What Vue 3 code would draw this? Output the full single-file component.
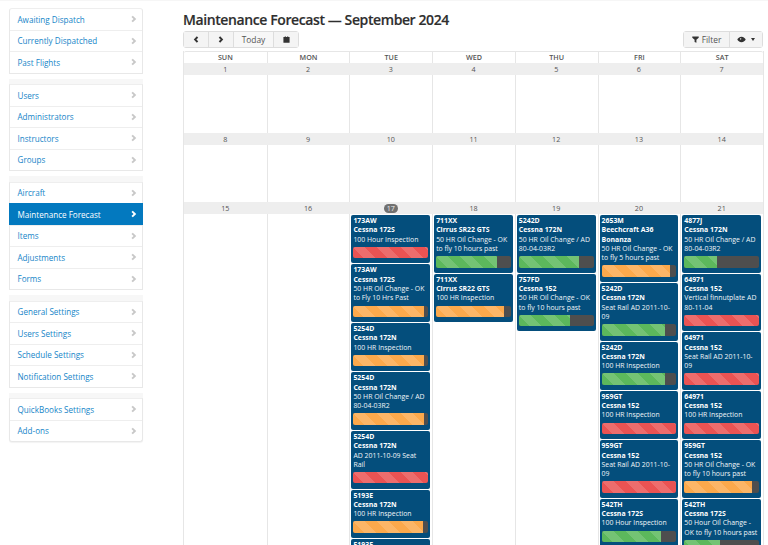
<script setup>
const groups = [
  ['Awaiting Dispatch', 'Currently Dispatched', 'Past Flights'],
  ['Users', 'Administrators', 'Instructors', 'Groups'],
  ['Aircraft', 'Maintenance Forecast', 'Items', 'Adjustments', 'Forms'],
  ['General Settings', 'Users Settings', 'Schedule Settings', 'Notification Settings'],
  ['QuickBooks Settings', 'Add-ons']
]
const days = ['SUN', 'MON', 'TUE', 'WED', 'THU', 'FRI', 'SAT']
const e = (tail, model, desc, color, pct) => ({ tail, model, desc, color, pct })
const weeks = [
  { nums: [1, 2, 3, 4, 5, 6, 7], cols: null },
  { nums: [8, 9, 10, 11, 12, 13, 14], cols: null },
  {
    nums: [15, 16, 17, 18, 19, 20, 21],
    cols: [
      [],
      [],
      [
        e('173AW', 'Cessna 172S', '100 Hour Inspection', 'red', 100),
        e('173AW', 'Cessna 172S', '50 HR Oil Change - OK to Fly 10 Hrs Past', 'orange', 95),
        e('5254D', 'Cessna 172N', '100 HR Inspection', 'orange', 95),
        e('5254D', 'Cessna 172N', '50 HR Oil Change / AD 80-04-03R2', 'orange', 95),
        e('5254D', 'Cessna 172N', 'AD 2011-10-09 Seat Rail', 'red', 100),
        e('5193E', 'Cessna 172N', '100 HR Inspection', 'orange', 93),
        e('5193E', 'Cessna 172N', '100 HR Inspection', 'orange', 93)
      ],
      [
        e('711XX', 'Cirrus SR22 GTS', '50 HR Oil Change - OK to fly 10 hours past', 'green', 82),
        e('711XX', 'Cirrus SR22 GTS', '100 HR Inspection', 'orange', 91)
      ],
      [
        e('5242D', 'Cessna 172N', '50 HR Oil Change / AD 80-04-03R2', 'green', 80),
        e('757FD', 'Cessna 152', '50 HR Oil Change - OK to fly 10 hours past', 'green', 69)
      ],
      [
        e('2653M', 'Beechcraft A36 Bonanza', '50 HR Oil Change - OK to fly 5 hours past', 'orange', 91),
        e('5242D', 'Cessna 172N', 'Seat Rail AD 2011-10-09', 'green', 85),
        e('5242D', 'Cessna 172N', '100 HR Inspection', 'green', 85),
        e('959GT', 'Cessna 152', '100 HR Inspection', 'red', 100),
        e('959GT', 'Cessna 152', 'Seat Rail AD 2011-10-09', 'red', 100),
        e('542TH', 'Cessna 172S', '100 Hour Inspection', 'green', 80)
      ],
      [
        e('4877J', 'Cessna 172N', '50 HR Oil Change / AD 80-04-03R2', 'green', 44),
        e('64971', 'Cessna 152', 'Vertical finnutplate AD 80-11-04', 'red', 100),
        e('64971', 'Cessna 152', 'Seat Rail AD 2011-10-09', 'red', 100),
        e('64971', 'Cessna 152', '100 HR Inspection', 'red', 100),
        e('959GT', 'Cessna 152', '50 HR Oil Change - OK to fly 10 hours past', 'orange', 91),
        e('542TH', 'Cessna 172S', '50 Hour Oil Change - OK to fly 10 hours past', 'green', 48)
      ]
    ]
  }
]
</script>

<template>
  <div class="page">
    <nav class="side">
      <template v-for="(g, i) in groups" :key="i">
        <div v-if="i" class="divider"></div>
        <ul class="group" :class="{ first: i === 0, last: i === groups.length - 1 }">
          <li v-for="item in g" :key="item" class="row" :class="{ active: item === 'Maintenance Forecast' }">
            <span>{{ item }}</span>
            <svg class="chev" viewBox="0 0 8 10" width="6" height="8"><path d="M2.4 0.6 L7 5 L2.4 9.4 L0.6 7.6 L3.4 5 L0.6 2.4 Z" /></svg>
          </li>
        </ul>
      </template>
    </nav>

    <main class="main">
      <h1 class="title">Maintenance Forecast — September 2024</h1>
      <div class="toolbar">
        <div class="btns">
          <button class="btn square first"><svg viewBox="0 0 8 10" width="6" height="7"><path d="M5.2 0.4 L7.2 2.4 L4.5 5 L7.2 7.6 L5.2 9.6 L0.8 5 Z" /></svg></button>
          <button class="btn square"><svg viewBox="0 0 8 10" width="6" height="7"><path d="M2.8 0.4 L0.8 2.4 L3.5 5 L0.8 7.6 L2.8 9.6 L7.2 5 Z" /></svg></button>
          <button class="btn today">Today</button>
          <button class="btn square"><svg viewBox="0 0 10 10" width="7" height="7"><path d="M0.6 1.6 H2.6 V0.2 H3.8 V1.6 H6.2 V0.2 H7.4 V1.6 H9.4 V9.8 H0.6 Z" /></svg></button>
        </div>
        <div class="btns">
          <button class="btn filter"><svg viewBox="0 0 10 10" width="7" height="7"><path d="M0.4 0.6 H9.6 V2.4 L6.3 5.2 V9.8 L3.7 8.6 V5.2 L0.4 2.4 Z" /></svg>Filter</button>
          <button class="btn eye"><svg viewBox="0 0 12 10" width="9" height="7"><path fill-rule="evenodd" d="M6 1 C9 1 11 3.2 12 5 C11 6.8 9 9 6 9 C3 9 1 6.8 0 5 C1 3.2 3 1 6 1 Z M4.8 3.2 A0.9 0.9 0 1 0 4.81 3.2 Z" /></svg><i class="caret"></i></button>
        </div>
      </div>

      <div class="cal">
        <div class="head">
          <div v-for="d in days" :key="d" class="hcell">{{ d }}</div>
        </div>
        <section v-for="(w, wi) in weeks" :key="wi" class="week">
          <div class="nums">
            <div v-for="n in w.nums" :key="n" class="num"><span :class="{ todayNum: n === 17 }">{{ n }}</span></div>
          </div>
          <div class="cells" :class="{ empty: !w.cols }">
            <div v-for="(n, ci) in w.nums" :key="n" class="cell">
              <template v-if="w.cols">
                <article v-for="(ev, ei) in w.cols[ci]" :key="ei" class="event">
                  <div class="b">{{ ev.tail }}</div>
                  <div class="b">{{ ev.model }}</div>
                  <div class="d">{{ ev.desc }}</div>
                  <div class="bar"><div class="fill" :class="ev.color" :style="{ width: ev.pct + '%' }"></div></div>
                </article>
              </template>
            </div>
          </div>
        </section>
      </div>
    </main>
  </div>
</template>

<style>
html, body { margin: 0; background: #fff; }
</style>

<style scoped>
.page {
  display: flex;
  align-items: flex-start;
  width: 768px;
  height: 545px;
  overflow: hidden;
  background: #fff;
  box-shadow: inset 0 1px 0 #f6f6f6;
  font-family: "Open Sans", sans-serif;
  box-sizing: border-box;
  padding-left: 9px;
}
.side { width: 134px; flex: none; margin-top: 8px; }
.group { list-style: none; margin: 0; padding: 0; border: 1px solid #e8e8e8; border-top-color: #eee; background: #fff; box-sizing: border-box; }
.group.first { border-radius: 3px 3px 0 0; }
.group.last { border-radius: 0 0 3px 3px; box-shadow: 0 1px 1px rgba(0,0,0,.05); }
.row {
  height: 21.5px;
  box-sizing: border-box;
  display: flex;
  align-items: center;
  justify-content: space-between;
  padding: 0 5px 0 7.5px;
  font-size: 8.1px;
  color: #1585c8;
  border-top: 1px solid #eee;
}
.row:first-child { border-top: 0; height: 20.5px; }
.row .chev { fill: #c8c8c8; }
.row.active { background: #0379bf; color: #fff; margin: 0 -1px; padding: 0 6px 0 8.5px; border-top-color: #0379bf; }
.row.active .chev { fill: #fff; }
.divider { height: 10.5px; box-sizing: border-box; border-top: 5px solid #fff; background: #f7f7f7; }

.main { width: 581px; flex: none; margin-left: 40px; }
.title { margin: 11px 0 0; font-size: 14px; line-height: 17px; font-weight: 600; color: #2e2e2e; letter-spacing: -0.4px; -webkit-text-stroke: 0.15px #2e2e2e; }
.toolbar { display: flex; justify-content: space-between; margin-top: 3px; height: 20px; padding-right: 1px; box-sizing: border-box; }
.btns { display: flex; height: 17px; border: 1px solid #ddd; border-radius: 3px; box-sizing: border-box; background: #f4f4f4; }
.btn {
  appearance: none;
  border: 0;
  border-left: 1px solid #ddd;
  background: #f4f4f4;
  height: 15px;
  padding: 0;
  font: 8.4px "Open Sans", sans-serif;
  color: #555;
  display: flex;
  align-items: center;
  justify-content: center;
  gap: 3px;
}
.btn:first-child { border-left: 0; }
.btn svg { fill: #333; }
.square { width: 25px; }
.square.first { width: 24px; }
.today { width: 40px; background: #f7f7f7; }
.filter { width: 45px; }
.eye { width: 33px; gap: 5px; }
.caret { width: 0; height: 0; border-left: 2.5px solid transparent; border-right: 2.5px solid transparent; border-top: 3px solid #333; }

.cal { border-right: 1px solid #e6e6e6; border-left: 1px solid #e6e6e6; }
.head, .nums, .cells { display: grid; grid-template-columns: repeat(7, 1fr); }
.head { height: 12px; border-top: 1px solid #e6e6e6; box-sizing: border-box; border-radius: 2px 2px 0 0; }
.hcell { font-size: 7.2px; font-weight: 600; line-height: 11px; text-align: center; color: #555; border-left: 1px solid #e6e6e6; }
.hcell:first-child { border-left: 0; }
.nums { height: 12px; background: #eee; }
.num { font-size: 7.2px; line-height: 12px; text-align: center; color: #555; }
.todayNum { display: inline-block; min-width: 14px; height: 8.5px; line-height: 8.5px; border-radius: 5px; background: #707070; color: #eee; }
.cells.empty { height: 57.5px; }
.cell { border-left: 1px solid #e6e6e6; padding: 1px 2px 0 1px; box-sizing: border-box; min-width: 0; }
.cell:first-child { border-left: 0; }
.event {
  background: #044e7c;
  color: #fff;
  border-radius: 2px;
  padding: 1px 2px 5.05px 2px;
  margin-bottom: 1px;
  font-size: 6.9px;
  line-height: 9.3px;
}
.b { font-weight: 700; }
.d { font-weight: 400; color: #f0f5f8; }
.bar { height: 11.4px; margin-top: 3px; background: #4e4e4e; border-radius: 2px; overflow: hidden; }
.fill {
  height: 100%;
  background-image: linear-gradient(45deg, rgba(255,255,255,.15) 25%, transparent 25%, transparent 50%, rgba(255,255,255,.15) 50%, rgba(255,255,255,.15) 75%, transparent 75%, transparent);
  background-size: 24px 24px;
}
.fill.red { background-color: #ea5353; }
.fill.orange { background-color: #fba94c; }
.fill.green { background-color: #5cb85c; }
</style>
